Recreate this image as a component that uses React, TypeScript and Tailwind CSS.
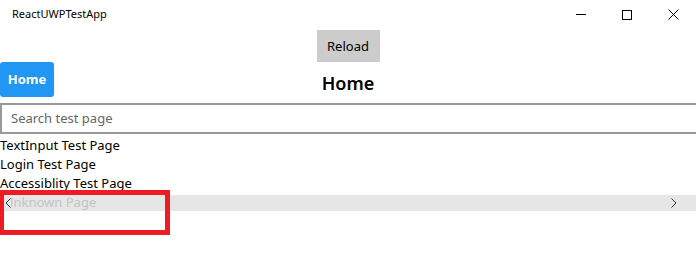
const pages = ["TextInput Test Page", "Login Test Page", "Accessiblity Test Page"];

function Chevron({ dir }: { dir: "left" | "right" }) {
  return (
    <svg width="6" height="10" viewBox="0 0 6 10" fill="none" stroke="#333333" strokeWidth="1">
      <path d={dir === "left" ? "M5.5 0.5 L1 5 L5.5 9.5" : "M0.5 0.5 L5 5 L0.5 9.5"} />
    </svg>
  );
}

export default function App() {
  return (
    <div className="relative h-[265px] w-[696px] overflow-hidden bg-white font-['Noto_Sans',sans-serif] text-black">
      {/* title bar */}
      <div className="flex h-[29px] items-center">
        <span className="pl-3 text-[11px]">ReactUWPTestApp</span>
        <div className="ml-auto flex h-full">
          <div className="flex w-[46px] items-center justify-center">
            <div className="h-px w-[10px] bg-black" />
          </div>
          <div className="flex w-[46px] items-center justify-center">
            <div className="h-[10px] w-[10px] border border-black" />
          </div>
          <div className="flex w-[46px] items-center justify-center">
            <svg width="11" height="11" viewBox="0 0 11 11" stroke="black" strokeWidth="1">
              <path d="M0.5 0.5 L10.5 10.5 M10.5 0.5 L0.5 10.5" />
            </svg>
          </div>
        </div>
      </div>

      <div className="flex justify-center pt-px">
        <button className="h-[32px] w-[63px] bg-[#cccccc] pt-px text-[13px]">Reload</button>
      </div>

      <div className="relative flex h-[35px] items-center justify-center">
        <button className="absolute left-0 top-0 h-[35px] w-[54px] rounded-[3px] bg-[#2196f3] text-[13px] font-bold text-white">
          Home
        </button>
        <h1 className="pt-2 text-[18px] font-semibold">Home</h1>
      </div>

      <div className="mt-[6px] flex h-[31px] items-center border-2 border-r-0 border-[#999999] pl-[9px] text-[13px] text-[#666666]">
        Search test page
      </div>

      <div className="mt-[2px] flex flex-col text-[13px] leading-[19px]">
        {pages.map((p) => (
          <div key={p}>{p}</div>
        ))}
      </div>

      <div className="relative mt-[2px] flex h-[16px] items-center bg-[#e6e6e6] text-[13px] text-[#c4c4c4]">
        <span className="pl-[4px]">Unknown Page</span>
        <div className="absolute left-[4px] top-0 flex h-full w-[7px] items-center justify-center bg-[#e6e6e6]">
          <Chevron dir="left" />
        </div>
        <div className="absolute right-[19px] top-0 flex h-full items-center">
          <Chevron dir="right" />
        </div>
      </div>

      {/* red annotation box */}
      <div className="absolute left-0 top-[190px] h-[45px] w-[170px] border-[5px] border-l-4 border-[#ed1c24]" />
    </div>
  );
}
